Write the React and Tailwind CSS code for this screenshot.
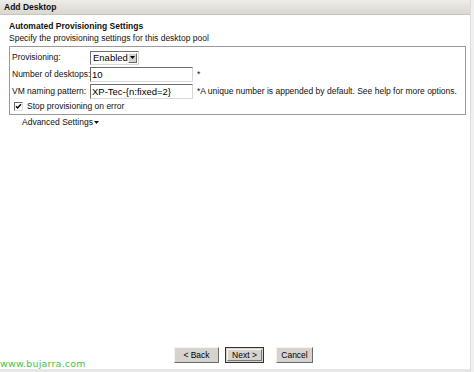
const FONT = { fontFamily: '"Liberation Sans", Arial, sans-serif' }

function Field({ label, children }) {
  return (
    <div className="flex h-[17px] items-center">
      <span className="w-[78px] shrink-0 whitespace-nowrap text-[8.5px] text-[#111]">{label}</span>
      {children}
    </div>
  )
}

function TextBox({ value }) {
  return (
    <div className="flex h-[15px] w-[103px] items-center border border-t-[#6d6d6d] border-l-[#6d6d6d] border-b-[#d8d8d8] border-r-[#d8d8d8] bg-white pl-[1px] text-[9.5px] leading-none text-black">
      {value}
    </div>
  )
}

function WinButton({ children, isDefault = false }) {
  return (
    <div
      className={
        isDefault
          ? 'flex h-[16px] w-[39px] items-center justify-center border border-[#333] bg-[#d6d3ce] p-[1px]'
          : 'flex h-[16px] items-center justify-center border border-t-[#f4f4f4] border-l-[#f4f4f4] border-b-[#6a6a6a] border-r-[#6a6a6a] bg-[#d6d3ce]'
      }
    >
      {isDefault ? (
        <div className="flex h-full w-full items-center justify-center border border-t-[#f4f4f4] border-l-[#f4f4f4] border-b-[#7a7a7a] border-r-[#7a7a7a] text-[8.5px] text-black">
          {children}
        </div>
      ) : (
        <span className="text-[8.5px] text-black">{children}</span>
      )}
    </div>
  )
}

export default function App() {
  return (
    <div className="relative flex h-[372px] w-[474px] overflow-hidden bg-white" style={FONT}>
      <div className="flex w-[470px] flex-col">
        <div className="flex h-[15px] items-center border-b border-[#c9c6bd] bg-gradient-to-b from-[#efede8] to-[#dad7cf] pl-[4px]">
          <span className="text-[8.5px] font-bold text-[#111]">Add Desktop</span>
        </div>

        <div className="flex flex-1 flex-col pl-[9px] pr-[5px]">
          <p className="mt-[6px] text-[8.5px] font-bold leading-[11px] text-[#111]">
            Automated Provisioning Settings
          </p>
          <p className="mt-[1px] text-[8.5px] leading-[11px] text-[#111]">
            Specify the provisioning settings for this desktop pool
          </p>

          <div className="mt-[2px] flex h-[69px] w-[457px] flex-col border border-[#9a9a9a] pl-[2px] pt-[2px]">
            <Field label="Provisioning:">
              <div className="flex h-[14px] w-[49px] items-center border border-t-[#6d6d6d] border-l-[#6d6d6d] border-b-[#d8d8d8] border-r-[#d8d8d8] bg-white">
                <span className="flex-1 pl-[2px] text-[9.5px] leading-none text-black">Enabled</span>
                <div className="mr-[1px] flex h-[10px] w-[10px] items-center justify-center border border-t-[#f4f4f4] border-l-[#f4f4f4] border-b-[#6a6a6a] border-r-[#6a6a6a] bg-[#d6d3ce]">
                  <svg width="5" height="3" viewBox="0 0 5 3">
                    <path d="M0 0h5L2.5 3z" fill="#000" />
                  </svg>
                </div>
              </div>
            </Field>
            <Field label="Number of desktops:">
              <TextBox value="10" />
              <span className="ml-[4px] text-[8.5px] text-[#111]">*</span>
            </Field>
            <Field label="VM naming pattern:">
              <TextBox value="XP-Tec-{n:fixed=2}" />
              <span className="ml-[4px] whitespace-nowrap text-[8.5px] text-[#111]">
                *A unique number is appended by default. See help for more options.
              </span>
            </Field>
            <div className="flex h-[13px] items-center pl-[2px]">
              <div className="flex h-[9px] w-[9px] items-center justify-center border border-t-[#6d6d6d] border-l-[#6d6d6d] border-b-[#e0e0e0] border-r-[#e0e0e0] bg-white">
                <svg width="7" height="7" viewBox="0 0 7 7">
                  <path d="M1 3.2l1.6 1.7L6 1.2" stroke="#000" strokeWidth="1.4" fill="none" />
                </svg>
              </div>
              <span className="ml-[4px] text-[8.5px] text-[#111]">Stop provisioning on error</span>
            </div>
          </div>

          <div className="mt-[2px] flex h-[11px] items-center pl-[13px]">
            <span className="text-[8.5px] text-[#111]">Advanced Settings</span>
            <svg width="5" height="3" viewBox="0 0 5 3" className="ml-[1px]">
              <path d="M0 0h5L2.5 3z" fill="#111" />
            </svg>
          </div>

          <div className="mt-auto mb-[6px] flex gap-[6px] pl-[165px]">
            <div className="w-[45px]">
              <WinButton>&lt; Back</WinButton>
            </div>
            <WinButton isDefault>Next &gt;</WinButton>
            <div className="ml-[6px] w-[37px]">
              <WinButton>Cancel</WinButton>
            </div>
          </div>
        </div>
        <div className="h-[3px] bg-[#e6e6e6]" />
      </div>
      <div className="w-[4px] border-l border-[#dcdcdc] bg-[#f0f0f0]" />

      <span
        className="absolute bottom-[4px] left-0 text-[9.5px] leading-none tracking-[0.2px] text-[#3fc53f]"
        style={{ fontFamily: '"DejaVu Sans", sans-serif' }}
      >
        www.bujarra.com
      </span>
    </div>
  )
}
